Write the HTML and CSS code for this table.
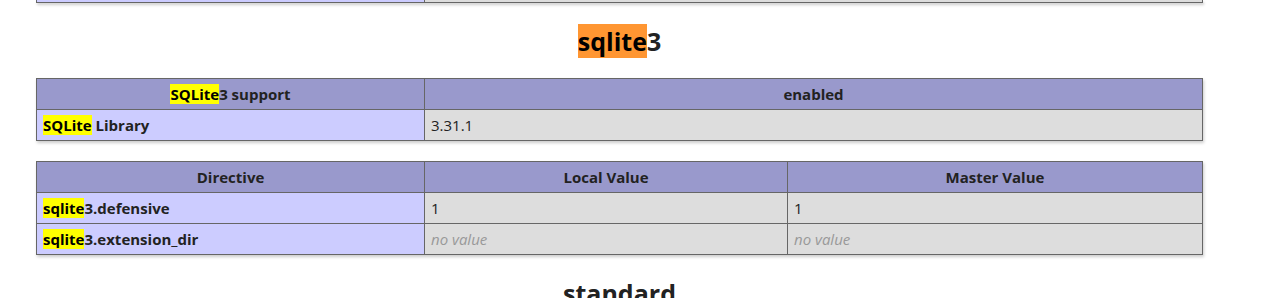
FILE: index.html
```html
<!DOCTYPE html>
<html>
<head>
<meta charset="utf-8">
<link rel="stylesheet" href="styles.css">
</head>
<body>
<div class="page">
  <div class="prev-row"><div class="prev-e"></div><div class="prev-v"></div></div>
  <h2 class="title"><span class="hl-active">sqlite</span>3</h2>
  <table class="info">
    <tr class="h"><th class="c1"><span class="hl">SQLite</span>3 support</th><th>enabled</th></tr>
    <tr><td class="e c1"><span class="hl">SQLite</span> Library</td><td class="v">3.31.1</td></tr>
  </table>
  <table class="info">
    <tr class="h"><th class="c1">Directive</th><th class="c2">Local Value</th><th>Master Value</th></tr>
    <tr><td class="e c1"><span class="hl">sqlite</span>3.defensive</td><td class="v c2">1</td><td class="v">1</td></tr>
    <tr><td class="e c1"><span class="hl">sqlite</span>3.extension_dir</td><td class="v c2"><i class="nv">no value</i></td><td class="v"><i class="nv">no value</i></td></tr>
  </table>
  <h2 class="title">standard</h2>
</div>
</body>
</html>
```
FILE: styles.css
```css
html, body { margin: 0; padding: 0; background: #fff; }
body { color: #222; font-family: "Open Sans", "Noto Sans", sans-serif; overflow: hidden; }
.page { width: 1167px; margin-left: 36px; }
.prev-row { display: flex; height: 3px; box-shadow: 1px 2px 3px #ccc; border: 1px solid #666; border-top: none; box-sizing: border-box; }
.prev-e { width: 387px; background: #ccf; border-right: 1px solid #666; }
.prev-v { flex: 1; background: #ddd; }
.title { margin: 22px 0 20px; font-size: 25px; font-weight: bold; text-align: center; line-height: 33px; }
.hl-active { background: #ff9632; color: #000; }
.hl { background: #ff0; color: #000; }
.info { width: 1167px; border-collapse: collapse; box-shadow: 1px 2px 3px #ccc; margin-bottom: 20px; table-layout: fixed; }
.info th, .info td { border: 1px solid #666; font-size: 15px; line-height: 20px; padding: 5px 6px; height: 20px; }
.info th { background: #99c; font-weight: bold; text-align: center; }
.info .c1 { width: 375px; }
.info .c2 { width: 350px; }
.info td.e { background: #ccf; font-weight: bold; text-align: left; }
.info td.v { background: #ddd; text-align: left; }
.nv { color: #999; }
```
